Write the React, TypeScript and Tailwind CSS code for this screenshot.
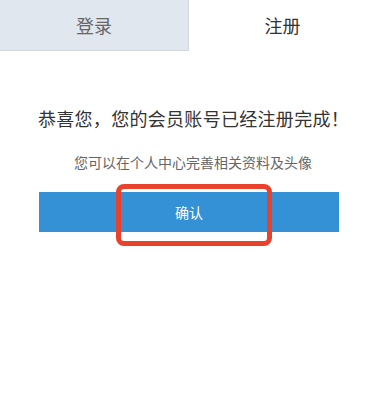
export default function App() {
  return (
    <div className="w-[378px] h-[404px] bg-white relative" style={{ fontFamily: '"Noto Sans CJK SC", "Noto Sans", sans-serif' }}>
      <div className="flex h-[51px]">
        <div className="w-[189px] h-[51px] bg-[#e1e7ee] border-r border-b border-[#d3d8de] flex items-center justify-center text-[18px] text-[#666]">
          登录
        </div>
        <div className="flex-1 flex items-center justify-center text-[18px] text-[#333] pr-[2px]">
          注册
        </div>
      </div>
      <div className="pt-[55px] flex flex-col">
        <div className="pl-[9px] text-center text-[18px] leading-[24px] text-[#333] tracking-[0.3px]">恭喜您，您的会员账号已经注册完成！</div>
        <div className="pl-[8px] mt-[22px] text-center text-[14px] leading-[20px] text-[#666]">您可以在个人中心完善相关资料及头像</div>
        <div className="mt-[20px] pl-[39px]">
          <button className="w-[300px] h-[40px] bg-[#3591d5] text-white text-[14px] pt-[1px]">
            确认
          </button>
        </div>
      </div>
      <div className="absolute left-[116px] top-[184px] w-[156px] h-[62px] border-[5px] border-[#e8412c] rounded-[8px]" />
    </div>
  );
}
